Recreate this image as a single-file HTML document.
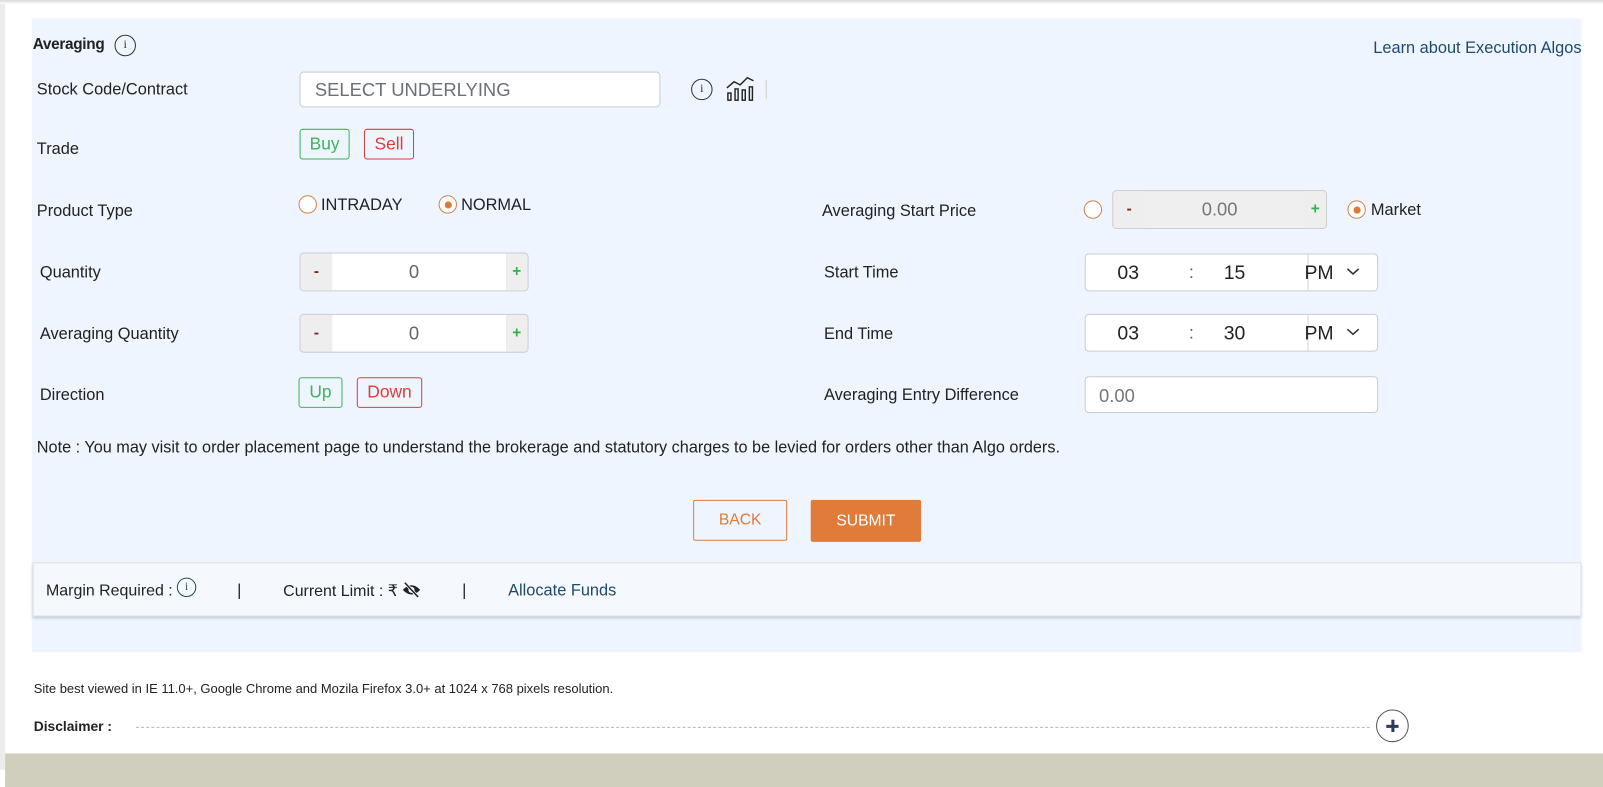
<!DOCTYPE html>
<html><head><meta charset="utf-8"><style>
*{margin:0;padding:0;box-sizing:border-box}
body{width:1603px;height:770px;position:relative;background:#fff;font-family:"Liberation Sans",sans-serif;color:#222;overflow:hidden}
#w{position:absolute;left:0;top:0;width:1568px;height:753px;transform:scale(1.02232);transform-origin:0 0}
.a{position:absolute;white-space:nowrap}
.lbl{font-size:16px;transform:translateY(-42%)}
.box{position:absolute;border:1px solid #c9ccd1;border-radius:4px;background:#fff}
.rad{position:absolute;width:18px;height:18px;border:1px solid #d2824d;border-radius:50%;background:#fff}
.rad.on::after{content:"";position:absolute;left:4.5px;top:4.5px;width:7px;height:7px;border-radius:50%;background:#d97a3e}
.ic{position:absolute;border:1px solid #333;border-radius:50%;font-size:11px;text-align:center;font-family:"Liberation Serif",serif}
.stp{position:absolute;border:1px solid #c9ccd1;border-radius:4px;background:#fff;overflow:hidden}
.stp .m,.stp .p{position:absolute;top:0;bottom:0;background:#eeeeee;font-weight:bold;font-size:15px;text-align:center}
.stp .m{left:0;width:31px;color:#8b1e1e}
.stp .p{right:0;width:21px;color:#2eb24a}
.stp .v{position:absolute;left:0;right:0;text-align:center;color:#666;font-size:18px}
.btn{font-size:17px}
</style></head><body>
<div id="w">
<div class="a" style="left:0;top:0;width:5px;height:753px;background:#ececec"></div>
<div class="a" style="left:0;top:0;width:1568px;height:4px;background:linear-gradient(#d8d8d8,#fff)"></div>
<div class="a" style="left:31px;top:18px;width:1516px;height:620px;background:#eef5fe"></div>

<div class="a" style="left:32px;top:35px;font-size:15px;font-weight:bold;letter-spacing:-0.3px">Averaging</div>
<div class="ic" style="left:112px;top:34px;width:21px;height:21px;line-height:19px">i</div>
<div class="a" style="right:21px;top:39px;font-size:16px;color:#1e4a6d">Learn about Execution Algos</div>

<div class="a lbl" style="left:36px;top:87px">Stock Code/Contract</div>
<div class="box" style="left:293px;top:70px;width:353px;height:35px"></div>
<div class="a" style="left:308px;top:78px;font-size:18px;color:#6b7078">SELECT UNDERLYING</div>
<div class="ic" style="left:676px;top:77px;width:21px;height:21px;line-height:19px">i</div>
<svg class="a" style="left:709px;top:74px" width="30" height="26" viewBox="0 0 30 26" fill="none" stroke="#222" stroke-width="1.4"><path d="M2 12 L9 6 L15 9 L22 2 L28 5"/><rect x="3" y="17" width="3" height="7"/><rect x="10" y="13" width="3" height="11"/><rect x="17" y="14" width="3" height="10"/><rect x="24" y="11" width="3" height="13"/></svg>
<div class="a" style="left:749px;top:78px;width:1px;height:19px;background:#ccc"></div>

<div class="a lbl" style="left:36px;top:145px">Trade</div>
<div class="a btn" style="left:293px;top:126px;width:49px;height:30px;border:1px solid #3bb55a;border-radius:3px;color:#3bb55a;text-align:center;line-height:28px">Buy</div>
<div class="a btn" style="left:356px;top:126px;width:49px;height:30px;border:1px solid #e03b3b;border-radius:3px;color:#e03b3b;text-align:center;line-height:28px">Sell</div>

<div class="a lbl" style="left:36px;top:206px">Product Type</div>
<div class="rad" style="left:292px;top:191px"></div>
<div class="a lbl" style="left:314px;top:200px">INTRADAY</div>
<div class="rad on" style="left:429px;top:191px"></div>
<div class="a lbl" style="left:451px;top:200px">NORMAL</div>

<div class="a lbl" style="left:39px;top:266px">Quantity</div>
<div class="stp" style="left:293px;top:247px;width:224px;height:38px;line-height:36px"><div class="m">-</div><div class="v">0</div><div class="p">+</div></div>
<div class="a lbl" style="left:39px;top:326px">Averaging Quantity</div>
<div class="stp" style="left:293px;top:307px;width:224px;height:38px;line-height:36px"><div class="m">-</div><div class="v">0</div><div class="p">+</div></div>

<div class="a lbl" style="left:39px;top:386px">Direction</div>
<div class="a btn" style="left:292px;top:369px;width:43px;height:30px;border:1px solid #3bb55a;border-radius:3px;color:#3bb55a;text-align:center;line-height:28px">Up</div>
<div class="a btn" style="left:349px;top:369px;width:64px;height:30px;border:1px solid #e03b3b;border-radius:3px;color:#e03b3b;text-align:center;line-height:28px">Down</div>

<div class="a lbl" style="left:804px;top:206px">Averaging Start Price</div>
<div class="rad" style="left:1060px;top:196px"></div>
<div class="stp" style="left:1088px;top:186px;width:210px;height:38px;line-height:36px;background:#efefef"><div class="m">-</div><div class="v" style="color:#777">0.00</div><div class="p">+</div></div>
<div class="rad on" style="left:1318px;top:196px"></div>
<div class="a lbl" style="left:1341px;top:205px">Market</div>

<div class="a lbl" style="left:806px;top:266px">Start Time</div>
<div class="box" style="left:1061px;top:248px;width:287px;height:37px"></div>
<div class="a" style="left:1279px;top:249px;width:1px;height:35px;background:#d0d3d8"></div>
<div class="a" style="left:1093px;top:257px;font-size:19px">03</div>
<div class="a" style="left:1163px;top:257px;font-size:17px;color:#555">:</div>
<div class="a" style="left:1197px;top:257px;font-size:19px">15</div>
<div class="a" style="left:1276px;top:257px;font-size:19px">PM</div>
<svg class="a" style="left:1317px;top:261px" width="13" height="9"><path d="M1 2 L6.5 7 L12 2" fill="none" stroke="#333" stroke-width="1.5"/></svg>

<div class="a lbl" style="left:806px;top:326px">End Time</div>
<div class="box" style="left:1061px;top:307px;width:287px;height:37px"></div>
<div class="a" style="left:1279px;top:308px;width:1px;height:35px;background:#d0d3d8"></div>
<div class="a" style="left:1093px;top:316px;font-size:19px">03</div>
<div class="a" style="left:1163px;top:316px;font-size:17px;color:#555">:</div>
<div class="a" style="left:1197px;top:316px;font-size:19px">30</div>
<div class="a" style="left:1276px;top:316px;font-size:19px">PM</div>
<svg class="a" style="left:1317px;top:320px" width="13" height="9"><path d="M1 2 L6.5 7 L12 2" fill="none" stroke="#333" stroke-width="1.5"/></svg>

<div class="a lbl" style="left:806px;top:386px">Averaging Entry Difference</div>
<div class="box" style="left:1061px;top:368px;width:287px;height:36px"></div>
<div class="a" style="left:1075px;top:377px;font-size:18px;color:#777">0.00</div>

<div class="a lbl" style="left:36px;top:437px;font-size:15.9px">Note : You may visit to order placement page to understand the brokerage and statutory charges to be levied for orders other than Algo orders.</div>

<div class="a" style="left:678px;top:489px;width:92px;height:40px;border:1px solid #e07b39;border-radius:2px;color:#e07b39;font-size:15.3px;text-align:center;line-height:38px">BACK</div>
<div class="a" style="left:793px;top:489px;width:108px;height:41px;background:#e07b39;border-radius:2px;color:#fff;font-size:15.3px;text-align:center;line-height:41px">SUBMIT</div>

<div class="a" style="left:32px;top:550px;width:1515px;height:53px;background:#f5f9fe;border:1px solid #dde2e8;box-shadow:0 2px 3px rgba(0,0,0,.2)"></div>
<div class="a lbl" style="left:45px;top:577px;font-size:15.6px">Margin Required :</div>
<div class="ic" style="left:173px;top:565px;width:19px;height:19px;line-height:17px;border-color:#1e4a6d;color:#1e4a6d">i</div>
<div class="a lbl" style="left:232px;top:577px">|</div>
<div class="a lbl" style="left:277px;top:577px;font-size:15.6px">Current Limit : ₹</div>
<svg class="a" style="left:393px;top:569px" width="19" height="16" viewBox="0 0 19 16"><path d="M1 8 Q9.5 -1 18 8 Q9.5 17 1 8Z" fill="#222"/><circle cx="9.5" cy="8" r="3" fill="#f5f9fe"/><path d="M3 1 L16 15" stroke="#f5f9fe" stroke-width="3"/><path d="M3 1 L16 15" stroke="#222" stroke-width="1.5"/></svg>
<div class="a lbl" style="left:452px;top:577px">|</div>
<div class="a lbl" style="left:497px;top:577px;color:#1e4a6d">Allocate Funds</div>

<div class="a" style="left:33px;top:667px;font-size:12.7px">Site best viewed in IE 11.0+, Google Chrome and Mozila Firefox 3.0+ at 1024 x 768 pixels resolution.</div>
<div class="a" style="left:33px;top:703px;font-size:13.5px;font-weight:bold">Disclaimer :</div>
<div class="a" style="left:133px;top:711px;width:1207px;border-top:1px dashed #b8b8b8"></div>
<div class="a" style="left:1346px;top:694px;width:32px;height:32px;border:1px solid #555;border-radius:50%"></div>
<div class="a" style="left:1356px;top:709px;width:12px;height:3px;background:#2c3a5c"></div>
<div class="a" style="left:1360.5px;top:704px;width:3px;height:12px;background:#2c3a5c"></div>

<div class="a" style="left:5px;top:737px;width:1563px;height:33px;background:#d0cfbd"></div>
</div>
</body></html>
